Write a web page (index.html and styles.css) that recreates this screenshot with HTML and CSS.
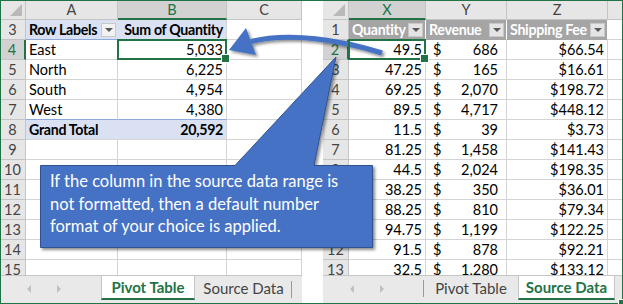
FILE: index.html
```html
<!DOCTYPE html>
<html lang="en">
  <head>
    <meta charset="UTF-8" />
    <title>Pivot Table number format</title>
    <link rel="stylesheet" href="styles.css">
  </head>
  <body>
    <div class="stage">
      <!-- pivot table workbook -->
      <div class="book pivot">
        <div class="sheet">
          <div class="c h corner"></div>
          <div class="c h">A</div>
          <div class="c h sel">B</div>
          <div class="c h">C</div>

          <div class="c h">3</div>
          <div class="c pv-head">Row Labels <span class="drop light"></span></div>
          <div class="c pv-head num">Sum of Quantity</div>
          <div class="c"></div>

          <div class="c h sel-row">4</div>
          <div class="c">East</div>
          <div class="c num active">5,033</div>
          <div class="c"></div>

          <div class="c h">5</div>
          <div class="c">North</div>
          <div class="c num">6,225</div>
          <div class="c"></div>

          <div class="c h">6</div>
          <div class="c">South</div>
          <div class="c num">4,954</div>
          <div class="c"></div>

          <div class="c h">7</div>
          <div class="c pv-last">West</div>
          <div class="c num pv-last">4,380</div>
          <div class="c"></div>

          <div class="c h">8</div>
          <div class="c pv-total">Grand Total</div>
          <div class="c pv-total num">20,592</div>
          <div class="c"></div>

          <div class="c h">9</div><div class="c"></div><div class="c"></div><div class="c"></div>
          <div class="c h">10</div><div class="c"></div><div class="c"></div><div class="c"></div>
          <div class="c h">11</div><div class="c"></div><div class="c"></div><div class="c"></div>
          <div class="c h">12</div><div class="c"></div><div class="c"></div><div class="c"></div>
          <div class="c h">13</div><div class="c"></div><div class="c"></div><div class="c"></div>
          <div class="c h">14</div><div class="c"></div><div class="c"></div><div class="c"></div>
          <div class="c h">15</div><div class="c"></div><div class="c"></div><div class="c"></div>
        </div>
        <div class="tabs">
          <div class="nav"><span class="arrow left"></span><span class="arrow right"></span></div>
          <div class="tab active">Pivot Table</div>
          <div class="tab sep">Source Data</div>
        </div>
      </div>

      <!-- source data workbook -->
      <div class="book source">
        <div class="sheet">
          <div class="c h corner"></div>
          <div class="c h sel">X</div>
          <div class="c h">Y</div>
          <div class="c h">Z</div>
          <div class="c h"></div>

          <div class="c h">1</div>
          <div class="c tb-head">Quantity <span class="drop"></span></div>
          <div class="c tb-head">Revenue <span class="drop"></span></div>
          <div class="c tb-head">Shipping Fee <span class="drop"></span></div>
          <div class="c"></div>

          <div class="c h sel-row">2</div>
          <div class="c num active">49.5</div>
          <div class="c acct"><span>$</span><span>686</span></div>
          <div class="c num">$66.54</div>
          <div class="c"></div>

          <div class="c h">3</div>
          <div class="c num">47.25</div>
          <div class="c acct"><span>$</span><span>165</span></div>
          <div class="c num">$16.61</div>
          <div class="c"></div>

          <div class="c h">4</div>
          <div class="c num">69.25</div>
          <div class="c acct"><span>$</span><span>2,070</span></div>
          <div class="c num">$198.72</div>
          <div class="c"></div>

          <div class="c h">5</div>
          <div class="c num">89.5</div>
          <div class="c acct"><span>$</span><span>4,717</span></div>
          <div class="c num">$448.12</div>
          <div class="c"></div>

          <div class="c h">6</div>
          <div class="c num">11.5</div>
          <div class="c acct"><span>$</span><span>39</span></div>
          <div class="c num">$3.73</div>
          <div class="c"></div>

          <div class="c h">7</div>
          <div class="c num">81.25</div>
          <div class="c acct"><span>$</span><span>1,458</span></div>
          <div class="c num">$141.43</div>
          <div class="c"></div>

          <div class="c h">8</div>
          <div class="c num">44.5</div>
          <div class="c acct"><span>$</span><span>2,024</span></div>
          <div class="c num">$198.35</div>
          <div class="c"></div>

          <div class="c h">9</div>
          <div class="c num">38.25</div>
          <div class="c acct"><span>$</span><span>350</span></div>
          <div class="c num">$36.01</div>
          <div class="c"></div>

          <div class="c h">10</div>
          <div class="c num">88.25</div>
          <div class="c acct"><span>$</span><span>810</span></div>
          <div class="c num">$79.34</div>
          <div class="c"></div>

          <div class="c h">11</div>
          <div class="c num">94.75</div>
          <div class="c acct"><span>$</span><span>1,199</span></div>
          <div class="c num">$122.25</div>
          <div class="c"></div>

          <div class="c h">12</div>
          <div class="c num">91.5</div>
          <div class="c acct"><span>$</span><span>878</span></div>
          <div class="c num">$92.21</div>
          <div class="c"></div>

          <div class="c h">13</div>
          <div class="c num">32.5</div>
          <div class="c acct"><span>$</span><span>1,280</span></div>
          <div class="c num">$133.12</div>
          <div class="c"></div>
        </div>
        <div class="tabs">
          <div class="nav sep"><span class="arrow left"></span><span class="arrow right"></span></div>
          <div class="tab">Pivot Table</div>
          <div class="tab active">Source Data</div>
        </div>
      </div>

      <!-- callout + arrow drawn over both sheets -->
      <svg class="overlay" width="623" height="304" viewBox="0 0 623 304">
        <defs>
          <filter id="shadow" x="-10%" y="-10%" width="130%" height="130%">
            <feDropShadow dx="2" dy="2" stdDeviation="1.5" flood-color="#000" flood-opacity="0.45" />
          </filter>
        </defs>
        <g filter="url(#shadow)">
          <path d="M40.5,165.5 H235 L336,57 L314,165.5 H372.5 V247.5 H40.5 Z" fill="#4472c4" stroke="#2f528f" stroke-width="1" />
          <path d="M382,53 C340,40 290,32 251,41.5" fill="none" stroke="#4472c4" stroke-width="5" />
          <polygon points="229,50 246,28 256,55" fill="#4472c4" />
        </g>
      </svg>
      <p class="note">If the column in the source data range is<br>not formatted, then a default number<br>format of your choice is applied.</p>
    </div>
  </body>
</html>
```

FILE: styles.css
```css
* {
  box-sizing: border-box;
}

body {
  margin: 0;
  font-family: Lato, "Liberation Sans", sans-serif;
  background: #fff;
}

.stage {
  position: relative;
  width: 623px;
  height: 304px;
  display: flex;
  gap: 21px;
  overflow: hidden;
}

.book {
  display: flex;
  flex-direction: column;
  height: 304px;
  background: #e9e9e9;
}

.pivot {
  width: 302px;
}

.source {
  width: 300px;
}

.sheet {
  display: grid;
  grid-auto-rows: 20px;
  height: 275px;
  overflow: hidden;
  background: #fff;
  font-size: 14.5px;
  color: #000;
}

.pivot .sheet {
  grid-template-columns: 26px 92px 109px 75px;
}

.source .sheet {
  grid-template-columns: 26px 77px 81px 101px 15px;
}

.c {
  position: relative;
  display: flex;
  align-items: center;
  padding: 0 3px;
  border-right: 1px solid #d4d4d4;
  border-bottom: 1px solid #d4d4d4;
  white-space: nowrap;
}

/* row / column headers */
.h {
  justify-content: center;
  background: #e6e6e6;
  border-color: #c4c4c4;
  color: #444;
}

.corner::after {
  content: "";
  position: absolute;
  right: 3px;
  bottom: 3px;
  border-style: solid;
  border-width: 0 0 12px 12px;
  border-color: transparent transparent #b9b9b9 transparent;
}

.h.sel {
  background: #d2d2d2;
  color: #217346;
  border-bottom: 2px solid #217346;
}

.h.sel-row {
  background: #d2d2d2;
  color: #217346;
  border-right: 2px solid #217346;
}

.num {
  justify-content: flex-end;
}

.acct {
  justify-content: space-between;
  padding: 0 8px 0 7px;
}

/* selected cell */
.active {
  z-index: 2;
}

.active::after {
  content: "";
  position: absolute;
  top: -1px;
  left: -1px;
  right: -1px;
  bottom: -1px;
  border: 2px solid #217346;
}

.active::before {
  content: "";
  position: absolute;
  right: -4px;
  bottom: -4px;
  width: 7px;
  height: 7px;
  background: #217346;
  border: 1px solid #fff;
  z-index: 3;
}

/* pivot table style */
.pv-head,
.pv-total,
.tb-head {
  font-weight: bold;
  font-size: 14.2px;
  letter-spacing: -0.3px;
}

.pv-head {
  background: #d9e1f2;
  border-right-color: #d9e1f2;
  border-bottom-color: #8ea9db;
  justify-content: space-between;
}

.pv-head.num {
  justify-content: flex-end;
  border-right-color: #d4d4d4;
}

.pv-last {
  border-bottom-color: #8ea9db;
}

.pv-total {
  background: #d9e1f2;
  border-right-color: #d9e1f2;
}

.pv-total.num {
  border-right-color: #d4d4d4;
}

/* excel table header */
.tb-head {
  justify-content: space-between;
  background: #a5a5a5;
  color: #fff;
  border-right-color: #fff;
  border-bottom-color: #a5a5a5;
  padding-right: 2px;
}

.drop {
  position: relative;
  flex: none;
  width: 15px;
  height: 14px;
  background: #e4e4e4;
  border: 1px solid #c8c8c8;
}

.drop.light {
  background: #f2f2f2;
  margin-right: -2px;
}

.drop::after {
  content: "";
  position: absolute;
  left: 3px;
  top: 4px;
  border-style: solid;
  border-width: 4px 4px 0 4px;
  border-color: #595959 transparent transparent transparent;
}

/* sheet tabs */
.tabs {
  display: flex;
  height: 25px;
  border-top: 1px solid #c6c6c6;
  font-size: 15px;
}

.nav {
  position: relative;
  width: 101px;
}

.nav.sep {
  border-right: 1px solid #9a9a9a;
  margin: 4px 0 3px;
  height: 17px;
}

.arrow {
  position: absolute;
  top: 9px;
  border-style: solid;
  border-width: 4px;
}

.nav.sep .arrow {
  top: 5px;
}

.arrow.left {
  left: 27px;
  border-color: transparent #c0c0c0 transparent transparent;
  border-left-width: 0;
}

.arrow.right {
  left: 57px;
  border-color: transparent transparent transparent #c0c0c0;
  border-right-width: 0;
}

.tab {
  display: flex;
  align-items: center;
  justify-content: center;
  width: 94px;
  color: #444;
}

.tab.sep {
  width: 97px;
  position: relative;
}

.tab.sep::after {
  content: "";
  position: absolute;
  right: 0;
  top: 5px;
  height: 17px;
  border-right: 1px solid #9a9a9a;
}

.tab.active {
  width: 94px;
  background: #fff;
  color: #217346;
  font-weight: bold;
  border-left: 1px solid #c6c6c6;
  border-right: 1px solid #c6c6c6;
  border-bottom: 2px solid #217346;
}

.source .tab.active {
  width: 97px;
}

/* callout */
.overlay {
  position: absolute;
  top: 0;
  left: 0;
  pointer-events: none;
}

.note {
  position: absolute;
  left: 50px;
  top: 170px;
  margin: 0;
  color: #fff;
  font-size: 16.5px;
  line-height: 22.5px;
  white-space: nowrap;
}
```
